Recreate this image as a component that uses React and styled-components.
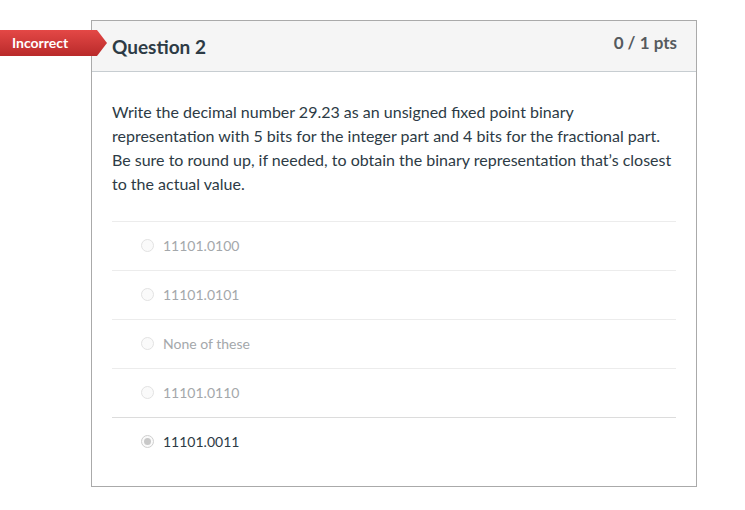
import styled, { createGlobalStyle } from "styled-components";

const Global = createGlobalStyle`
  body {
    margin: 0;
    background: #fff;
    font-family: Lato, "Open Sans", sans-serif;
  }
`;

const Page = styled.div`
  position: relative;
  padding: 20px 48px 0 91px;
`;

const Badge = styled.div`
  position: absolute;
  left: 0;
  top: 30px;
  height: 26px;
  width: 107px;
  display: flex;
  align-items: center;
  padding: 0 0 2px 12px;
  box-sizing: border-box;
  color: #fff;
  font-weight: 700;
  font-size: 14px;
  background: linear-gradient(to bottom, #e44846, #b92a2a);
  clip-path: polygon(0 0, 97px 0, 107px 50%, 97px 100%, 0 100%);
`;

const Card = styled.div`
  width: 606px;
  border: 1px solid #aaaaaa;
  box-sizing: border-box;
`;

const Header = styled.div`
  display: flex;
  justify-content: space-between;
  align-items: center;
  height: 50px;
  padding: 0 19px 0 20px;
  background: #f5f5f5;
  border-bottom: 1px solid #c7cdd1;
`;

const Title = styled.h2`
  margin: 1px 0 0;
  font-size: 19px;
  font-weight: 700;
  color: #2d3b45;
`;

const Points = styled.div`
  font-size: 17px;
  font-weight: 700;
  color: #555a5e;
  margin-top: -8px;
`;

const Body = styled.div`
  padding: 28px 20px 20px;
`;

const Text = styled.p`
  margin: 0 0 25px;
  font-size: 16px;
  line-height: 24px;
  color: #2d3b45;
`;

const Answer = styled.div`
  display: flex;
  align-items: center;
  height: 46px;
  padding: 0 0 2px 30px;
  border-top: 1px solid ${(p) => (p.$strong ? "#dcdcdc" : "#ececec")};
  font-size: 14px;
  color: ${(p) => (p.$selected ? "#2d3b45" : "#a4a8ab")};
`;

const Radio = styled.span`
  width: 13px;
  height: 13px;
  border-radius: 50%;
  border: 1px solid ${(p) => (p.$selected ? "#cfcfcf" : "#e2e2e2")};
  background: #fafafa;
  margin: 0 9px 0 -1px;
  display: flex;
  align-items: center;
  justify-content: center;
  box-sizing: border-box;
  &::after {
    content: "";
    width: 7px;
    height: 7px;
    border-radius: 50%;
    background: ${(p) => (p.$selected ? "#c8c8c8" : "transparent")};
  }
`;

const answers = [
  { text: "11101.0100" },
  { text: "11101.0101" },
  { text: "None of these" },
  { text: "11101.0110" },
  { text: "11101.0011", selected: true },
];

export default function App() {
  return (
    <>
      <Global />
      <Page>
        <Badge>Incorrect</Badge>
        <Card>
          <Header>
            <Title>Question 2</Title>
            <Points>0 / 1 pts</Points>
          </Header>
          <Body>
            <Text>
              Write the decimal number 29.23 as an unsigned fixed point binary
              representation with 5 bits for the integer part and 4 bits for the
              fractional part. Be sure to round up, if needed, to obtain the
              binary representation that’s closest to the actual value.
            </Text>
            {answers.map((a, i) => (
              <Answer key={i} $selected={a.selected} $strong={i === 4}>
                <Radio $selected={a.selected} />
                {a.text}
              </Answer>
            ))}
          </Body>
        </Card>
      </Page>
    </>
  );
}
